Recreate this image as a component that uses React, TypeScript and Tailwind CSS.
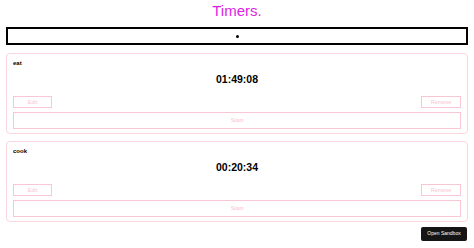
import React from "react";

type Timer = { name: string; time: string };

const timers: Timer[] = [
  { name: "eat", time: "01:49:08" },
  { name: "cook", time: "00:20:34" },
];

function TimerCard({ timer }: { timer: Timer }) {
  return (
    <div className="flex flex-col rounded-[4px] border border-[#fad6df] px-[6px] pt-[5px] pb-[4px]">
      <div className="h-[8px] text-[6px] leading-[8px] font-bold text-black">{timer.name}</div>
      <div className="mt-[5px] h-[14px] text-center text-[10.5px] leading-[14px] font-bold text-black">
        {timer.time}
      </div>
      <div className="mt-[10px] flex h-[12px] justify-between">
        <button className="w-[39px] border border-[#f9c6d3] text-[5.5px] text-[#f8c4d1]">Edit</button>
        <button className="w-[40px] border border-[#f9c6d3] text-[5.5px] text-[#f8c4d1]">Remove</button>
      </div>
      <button className="mt-[4px] h-[17px] w-full border border-[#f9c6d3] text-[6px] text-[#f8c4d1]">
        Start
      </button>
    </div>
  );
}

export default function App() {
  return (
    <div className="relative h-[248px] w-[474px] bg-white px-[6px] font-['Liberation_Sans',Arial,sans-serif]">
      <h1 className="pt-[1px] text-center text-[15px] leading-[20px] font-normal text-[#e01fe4]">Timers.</h1>
      <div className="mt-[6px] flex h-[18px] items-center justify-center border-2 border-black">
        <span className="h-[3px] w-[3px] rounded-full bg-black" />
      </div>
      <div className="mt-[8px] flex flex-col gap-[7px]">
        {timers.map((t) => (
          <TimerCard key={t.name} timer={t} />
        ))}
      </div>
      <div className="absolute right-[7px] top-[227px] flex h-[14px] w-[46px] items-center justify-center rounded-[2px] bg-[#151515] text-[5px] text-white">
        Open Sandbox
      </div>
    </div>
  );
}
